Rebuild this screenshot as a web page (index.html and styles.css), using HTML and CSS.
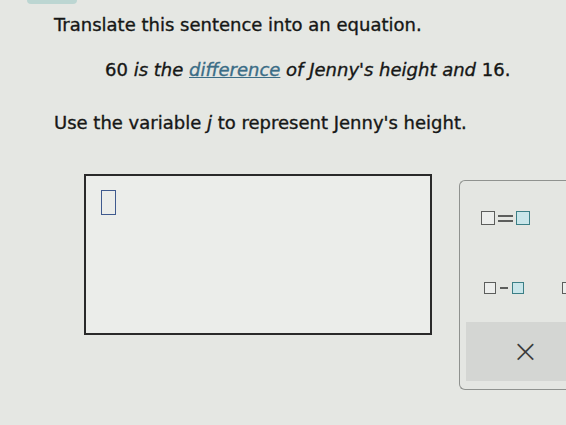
FILE: index.html
```html
<!DOCTYPE html>
<html lang="en">
<head>
    <meta charset="UTF-8">
    <title>Translate into an equation</title>
    <link rel="stylesheet" href="styles.css">
</head>
<body>
    <div class="tab"></div>

    <div class="pregunta">
        <p class="titulo">Translate this sentence into an equation.</p>
        <p class="frase">60 <i>is the</i> <span class="enlace">difference</span> <i>of Jenny's height and</i> 16.</p>
        <p class="instruccion">Use the variable <i>j</i> to represent Jenny's height.</p>
    </div>

    <div class="trabajo">
        <div class="respuesta">
            <span class="cursor"></span>
        </div>

        <div class="teclado">
            <div class="fila fila1">
                <span class="simbolo"><span class="caja"></span><span class="igual"></span><span class="caja azul"></span></span>
            </div>
            <div class="fila fila2">
                <span class="simbolo"><span class="caja"></span><span class="menos"></span><span class="caja azul"></span></span>
                <span class="simbolo"><span class="caja"></span></span>
            </div>
            <div class="boton">&times;</div>
        </div>
    </div>
</body>
</html>
```

FILE: styles.css
```css
body {
    margin: 0;
    background-color: #e5e7e3;
    font-family: "DejaVu Sans", Verdana, sans-serif;
    color: #161716;
    width: 566px;
    height: 425px;
    overflow: hidden;
}

.tab {
    margin-left: 27px;
    width: 50px;
    height: 4px;
    background-color: #bcd6d2;
    border-radius: 0 0 10px 10px;
}

.pregunta {
    padding-left: 54px;
}

.pregunta p {
    margin: 0;
    font-size: 18px;
    line-height: 20px;
    white-space: nowrap;
    -webkit-text-stroke: 0.35px #161716;
}

.titulo {
    padding-top: 11px;
}

.frase {
    padding-top: 25px;
    padding-left: 51px;
}

.instruccion {
    padding-top: 33px;
}

.pregunta .enlace {
    font-style: italic;
    color: #3b6d86;
    text-decoration: underline;
    -webkit-text-stroke: 0.35px #3b6d86;
}

.trabajo {
    display: flex;
    align-items: flex-start;
    margin-top: 41px;
    margin-left: 84px;
}

.respuesta {
    flex-shrink: 0;
    width: 348px;
    height: 161px;
    border: 2px solid #2a2a2a;
    background-color: #ebedea;
    padding: 14px 0 0 15px;
    box-sizing: border-box;
}

.cursor {
    display: block;
    width: 15px;
    height: 25px;
    border: 1.5px solid #3f5a8e;
    box-sizing: border-box;
}

/* el panel sigue fuera de la pantalla: sin borde derecho */
.teclado {
    margin-left: 27px;
    margin-top: 6px;
    width: 107px;
    height: 210px;
    flex-shrink: 0;
    overflow: hidden;
    border: 1.5px solid #8f928f;
    border-right: none;
    border-radius: 6px 0 0 6px;
    background-color: #e4e6e2;
    box-sizing: border-box;
    padding: 0 0 0 6px;
}

.fila {
    display: flex;
    gap: 38px;
}

.fila1 {
    margin-top: 30px;
    padding-left: 15px;
    height: 14px;
}

.fila2 {
    margin-top: 57px;
    padding-left: 18px;
    height: 12px;
}

.simbolo {
    display: flex;
    align-items: center;
    flex-shrink: 0;
}

.caja {
    width: 12px;
    height: 12px;
    flex-shrink: 0;
    border: 1.5px solid #5c5e5c;
    box-sizing: border-box;
    background-color: #eceeec;
}

.caja.azul {
    border-color: #3b7f86;
    background-color: #c9e6ea;
}

.fila1 .caja {
    width: 14px;
    height: 14px;
}

.igual {
    width: 15px;
    height: 7px;
    margin: 0 3px 0 3px;
    border-top: 2px solid #5c5e5c;
    border-bottom: 2px solid #5c5e5c;
    box-sizing: border-box;
}

.menos {
    width: 8px;
    height: 2px;
    margin: 0 4px;
    background-color: #5c5e5c;
}

.boton {
    margin-top: 28px;
    height: 59px;
    background-color: #d4d6d3;
    font-size: 32px;
    font-weight: 300;
    line-height: 59px;
    color: #3a3c3a;
    padding-left: 46px;
}
```
